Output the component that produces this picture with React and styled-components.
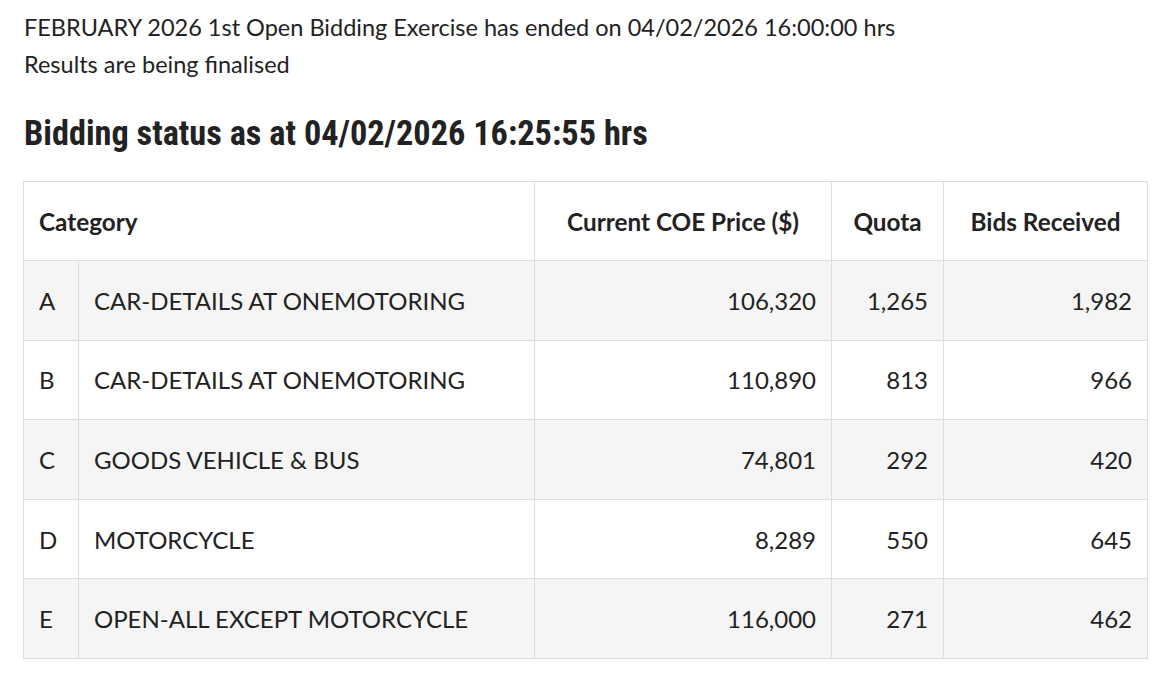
import React from 'react'
import styled, { createGlobalStyle } from 'styled-components'

const GlobalStyle = createGlobalStyle`
  body {
    margin: 0;
    background: #fff;
    font-family: Lato, "Liberation Sans", sans-serif;
    color: #222;
  }
`

const Page = styled.main`
  padding: 9px 12px 20px 23px;
`

const Notice = styled.p`
  margin: 0 0 0 1px;
  font-size: 23.5px;
  line-height: 37px;
  color: #222;
`

const Heading = styled.h2`
  margin: 30px 0 0 1px;
  font-family: "Roboto Condensed", "Liberation Sans Narrow", "Arial Narrow", Roboto, sans-serif;
  font-weight: 700;
  font-size: 34.3px;
  line-height: 40px;
  color: #222;
`

const Table = styled.table`
  margin-top: 28px;
  width: 1124px;
  table-layout: fixed;
  border-collapse: collapse;
  font-size: 24px;
  color: #222;
`

const Col = styled.col`
  width: ${p => p.$w};
`

const HeadCell = styled.th`
  height: 78px;
  padding: 0 15px;
  border: 1px solid #ddd;
  font-size: 24.3px;
  font-weight: 700;
  text-align: ${p => (p.$center ? 'center' : 'left')};
`

const Row = styled.tr`
  background: ${p => (p.$striped ? '#f5f5f5' : '#fff')};
`

const Cell = styled.td`
  height: 78.6px;
  padding: 0 15px;
  border: 1px solid #ddd;
  white-space: nowrap;
  text-align: ${p => (p.$right ? 'right' : 'left')};
`

const rows = [
  { cat: 'A', desc: 'CAR-DETAILS AT ONEMOTORING', price: '106,320', quota: '1,265', bids: '1,982' },
  { cat: 'B', desc: 'CAR-DETAILS AT ONEMOTORING', price: '110,890', quota: '813', bids: '966' },
  { cat: 'C', desc: 'GOODS VEHICLE & BUS', price: '74,801', quota: '292', bids: '420' },
  { cat: 'D', desc: 'MOTORCYCLE', price: '8,289', quota: '550', bids: '645' },
  { cat: 'E', desc: 'OPEN-ALL EXCEPT MOTORCYCLE', price: '116,000', quota: '271', bids: '462' },
]

export default function App() {
  return (
    <>
      <GlobalStyle />
      <Page>
        <Notice>FEBRUARY 2026 1st Open Bidding Exercise has ended on 04/02/2026 16:00:00 hrs</Notice>
        <Notice>Results are being finalised</Notice>
        <Heading>Bidding status as at 04/02/2026 16:25:55 hrs</Heading>
        <Table>
          <colgroup>
            <Col $w="55px" />
            <Col $w="456px" />
            <Col $w="297px" />
            <Col $w="112px" />
            <Col $w="204px" />
          </colgroup>
          <thead>
            <tr>
              <HeadCell colSpan={2}>Category</HeadCell>
              <HeadCell $center>Current COE Price ($)</HeadCell>
              <HeadCell $center>Quota</HeadCell>
              <HeadCell $center>Bids Received</HeadCell>
            </tr>
          </thead>
          <tbody>
            {rows.map((r, i) => (
              <Row key={r.cat} $striped={i % 2 === 0}>
                <Cell>{r.cat}</Cell>
                <Cell>{r.desc}</Cell>
                <Cell $right>{r.price}</Cell>
                <Cell $right>{r.quota}</Cell>
                <Cell $right>{r.bids}</Cell>
              </Row>
            ))}
          </tbody>
        </Table>
      </Page>
    </>
  )
}
